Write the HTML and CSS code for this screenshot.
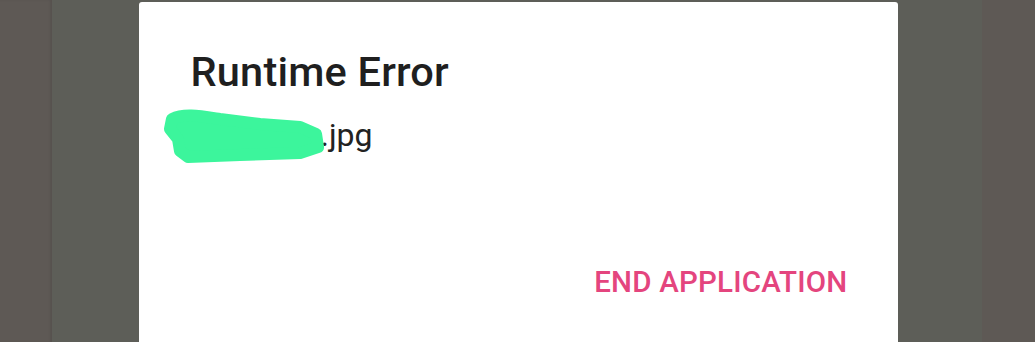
FILE: index.html
```html
<!DOCTYPE html>
<html>
<head>
<meta charset="utf-8">
<link rel="stylesheet" href="styles.css">
</head>
<body>
<div class="screen">
  <div class="band band-left"></div>
  <div class="scrim">
    <div class="dialog">
      <h1 class="title">Runtime Error</h1>
      <p class="message"><span class="redact"><svg class="scribble" viewBox="0 0 170 64" width="170" height="64"><path d="M12 16 C 24 10, 40 13, 60 16 L 100 21 L 140 24 L 156 31 L 158 44 L 140 50 L 80 52 L 28 54 L 20 48 L 18 36 L 10 26 Z" fill="#3cf59c" stroke="#3cf59c" stroke-width="12" stroke-linejoin="round"/></svg></span>.jpg</p>
      <div class="actions"><span class="btn">END APPLICATION</span></div>
    </div>
  </div>
  <div class="band band-right"></div>
</div>
</body>
</html>
```
FILE: styles.css
```css
html, body {
  margin: 0;
  padding: 0;
  width: 1035px;
  height: 342px;
  overflow: hidden;
  background: #5d5d58;
}
.screen {
  display: flex;
  width: 1035px;
  height: 342px;
}
.band {
  height: 100%;
  background: #5e5955;
}
.band-left {
  width: 52px;
  box-shadow: inset -2px 0 2px rgba(0,0,0,0.08);
}
.band-right {
  width: 53px;
}
.scrim {
  flex: 1;
  display: flex;
  justify-content: center;
  padding-top: 2px;
  background: #5d5e58;
}
.dialog {
  width: 759px;
  margin-left: 2px;
  background: #ffffff;
  border-radius: 3px 3px 0 0;
  box-sizing: border-box;
  padding: 50px 50px 0 52px;
  font-family: Roboto, "Noto Sans", sans-serif;
  height: 340px;
}
.title {
  margin: 0;
  font-weight: 500;
  font-size: 41.5px;
  line-height: 40px;
  color: #1f1f1f;
  letter-spacing: 0.2px;
}
.message {
  margin: 23px 0 0 -28px;
  font-size: 32px;
  line-height: 40px;
  color: #222;
  display: flex;
  align-items: center;
}
.redact {
  display: inline-block;
  width: 158px;
  height: 40px;
  position: relative;
}
.scribble {
  position: absolute;
  left: -3px;
  top: -12px;
}
.actions {
  display: flex;
  justify-content: flex-end;
  margin-top: 111px;
}
.btn {
  font-weight: 500;
  font-size: 29.5px;
  line-height: 32px;
  color: #e4457e;
  letter-spacing: 0.2px;
}
```
